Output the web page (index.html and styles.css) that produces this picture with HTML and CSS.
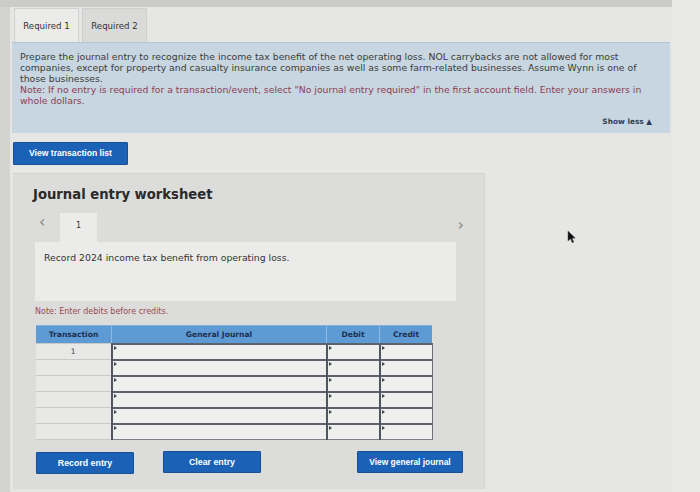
FILE: index.html
```html
<!DOCTYPE html>
<html>
<head>
<meta charset="utf-8">
<link rel="stylesheet" href="styles.css">
</head>
<body>
<div class="screen">
  <div class="topbar"></div>
  <div class="column">
    <div class="tabs">
      <div class="tab active">Required 1</div>
      <div class="tab">Required 2</div>
    </div>
    <div class="instructions">
      <p>Prepare the journal entry to recognize the income tax benefit of the net operating loss. NOL carrybacks are not allowed for most<br>companies, except for property and casualty insurance companies as well as some farm-related businesses. Assume Wynn is one of<br>those businesses.</p>
      <p class="note">Note: If no entry is required for a transaction/event, select "No journal entry required" in the first account field. Enter your answers in<br>whole dollars.</p>
      <div class="show-less">Show less &#9650;</div>
    </div>
    <div class="btn-row">
      <button class="btn btn-list">View transaction list</button>
    </div>
    <div class="worksheet">
      <h2 class="ws-title">Journal entry worksheet</h2>
      <div class="ws-nav">
        <span class="arrow left">&lsaquo;</span>
        <div class="ws-tab">1</div>
        <span class="arrow right">&rsaquo;</span>
      </div>
      <div class="ws-box">Record 2024 income tax benefit from operating loss.</div>
      <div class="ws-note">Note: Enter debits before credits.</div>
      <table class="journal">
        <thead>
          <tr><th class="c-tr">Transaction</th><th class="c-gj">General Journal</th><th class="c-amt">Debit</th><th class="c-amt">Credit</th></tr>
        </thead>
        <tbody>
          <tr><td class="tr">1</td><td class="in"></td><td class="in"></td><td class="in"></td></tr>
          <tr><td class="tr"></td><td class="in"></td><td class="in"></td><td class="in"></td></tr>
          <tr><td class="tr"></td><td class="in"></td><td class="in"></td><td class="in"></td></tr>
          <tr><td class="tr"></td><td class="in"></td><td class="in"></td><td class="in"></td></tr>
          <tr><td class="tr"></td><td class="in"></td><td class="in"></td><td class="in"></td></tr>
          <tr><td class="tr"></td><td class="in"></td><td class="in"></td><td class="in"></td></tr>
        </tbody>
      </table>
      <div class="ws-actions">
        <button class="btn btn-record">Record entry</button>
        <button class="btn btn-clear">Clear entry</button>
        <button class="btn btn-view">View general journal</button>
      </div>
    </div>
  </div>
  <svg class="cursor" width="9" height="14" viewBox="0 0 9 14"><path d="M1 1 L1 11 L3.5 8.8 L5.3 12.8 L6.8 12.1 L5 8.3 L8.2 8.1 Z" fill="#111" stroke="#555" stroke-width="0.5"/></svg>
</div>
</body>
</html>
```

FILE: styles.css
```css
html, body {
  margin: 0;
  padding: 0;
}
body {
  background: #e7e7e5;
  font-family: "DejaVu Sans", Verdana, sans-serif;
  color: #333;
}
.screen {
  position: relative;
  width: 700px;
  height: 492px;
  overflow: hidden;
  background: linear-gradient(90deg, #d3d3d1 0, #d3d3d1 10px, #e6e6e4 10px, #e6e6e4 672px, #e9e9e8 672px);
}
.topbar {
  width: 672px;
  height: 7px;
  background: #cbcbca;
}
.column {
  margin-left: 12px;
  width: 658px;
  display: flex;
  flex-direction: column;
}
.tabs {
  display: flex;
  gap: 3px;
  margin-top: 1px;
  padding-left: 2px;
  height: 34px;
}
.tab {
  width: 65px;
  height: 34px;
  box-sizing: border-box;
  border: 1px solid #cfcfcf;
  border-bottom: none;
  background: #dadad9;
  font-size: 8.6px;
  color: #333;
  display: flex;
  align-items: center;
  justify-content: center;
}
.tab.active {
  background: #ebebea;
}
.instructions {
  height: 91px;
  box-sizing: border-box;
  background: #c7d6e1;
  border-top: 1px solid #b4c6d4;
  padding: 8px 14px 0 8px;
  display: flex;
  flex-direction: column;
  font-size: 9.3px;
  line-height: 11px;
  color: #3b3b3b;
}
.instructions p {
  margin: 0;
  white-space: nowrap;
}
.instructions .note {
  color: #8c3d55;
}
.show-less {
  margin-top: auto;
  margin-bottom: 6px;
  align-self: flex-end;
  font-size: 7.4px;
  font-weight: bold;
  color: #2e3d58;
  padding-right: 4px;
}
.btn {
  flex-shrink: 0;
  border: 1px solid #174f95;
  background: #1b62b7;
  color: #fff;
  font-family: "Liberation Sans", Arial, sans-serif;
  font-weight: bold;
  font-size: 8.8px;
  padding: 0;
  border-radius: 1px;
  cursor: pointer;
}
.btn-row {
  margin-top: 8px;
  padding-left: 1px;
}
.btn-list {
  width: 115px;
  height: 23px;
  font-size: 8.6px;
}
.worksheet {
  margin-top: 8px;
  margin-left: 1px;
  width: 472px;
  height: 316px;
  box-sizing: border-box;
  background: #dcdcda;
  border-top: 1px solid #d2d2d0;
  border-right: 1px solid #d4d4d2;
  padding: 13px 15px 0 22px;
  display: flex;
  flex-direction: column;
}
.ws-title {
  margin: 0 0 0 -2px;
  font-size: 13.2px;
  line-height: 15px;
  font-weight: bold;
  color: #2a2a2a;
}
.ws-nav {
  margin-top: 11px;
  height: 29px;
  width: 421px;
  display: flex;
  align-items: flex-start;
}
.arrow {
  font-size: 16px;
  line-height: 16px;
  color: #888;
  font-family: "DejaVu Sans", sans-serif;
}
.arrow.left {
  margin: 1px 0 0 4px;
  width: 21px;
}
.arrow.right {
  margin: 4px 0 0 auto;
  position: relative;
  left: 8px;
}
.ws-tab {
  width: 37px;
  height: 29px;
  background: #ebebea;
  font-size: 8px;
  text-align: center;
  padding-top: 8px;
  box-sizing: border-box;
  color: #333;
}
.ws-box {
  width: 421px;
  height: 59px;
  box-sizing: border-box;
  background: #ebebea;
  padding: 10px 9px 0;
  font-size: 9.3px;
  line-height: 11px;
  color: #333;
}
.ws-note {
  margin-top: 6px;
  font-size: 8px;
  line-height: 10px;
  color: #9a4a52;
}
.journal {
  margin-top: 8px;
  margin-left: 1px;
  width: 393px;
  border-collapse: collapse;
  table-layout: fixed;
}
.journal th {
  height: 17px;
  padding: 0;
  background: #5e9bd5;
  color: #1d2f52;
  font-size: 7.6px;
  font-weight: bold;
  border-left: 1px solid #8bbbe6;
  border-top: 1px solid #7fb0de;
}
.journal th:first-child {
  border-left: none;
}
.c-tr { width: 75px; }
.c-gj { width: 214px; }
.c-amt { width: 52px; }
.journal td {
  height: 14px;
  padding: 0;
  font-size: 7.5px;
  text-align: center;
  color: #444;
}
.journal td.tr {
  background: #e8e8e6;
  border: 1px solid #c9c9c7;
  border-left: none;
}
.journal td.in {
  position: relative;
  background: #efefed;
  border-top: 2px solid #5b636d;
  border-left: 2px solid #4f565f;
  border-right: 1px solid #6a717a;
}
.journal tbody tr:last-child td.in {
  border-bottom: 1px solid #7b828a;
}
.journal td.in::before {
  content: "";
  position: absolute;
  left: 1px;
  top: 1px;
  border-top: 2px solid transparent;
  border-bottom: 2px solid transparent;
  border-left: 3px solid #3c4450;
}
.ws-actions {
  margin-top: 11px;
  display: flex;
  align-items: flex-start;
}
.btn-record {
  margin-left: 1px;
  width: 98px;
  height: 22px;
  margin-top: 1px;
}
.btn-clear {
  margin-left: 29px;
  width: 98px;
  height: 22px;
}
.btn-view {
  margin-left: 96px;
  width: 106px;
  height: 22px;
  font-size: 8.4px;
}
.cursor {
  position: absolute;
  left: 567px;
  top: 230px;
}
```
